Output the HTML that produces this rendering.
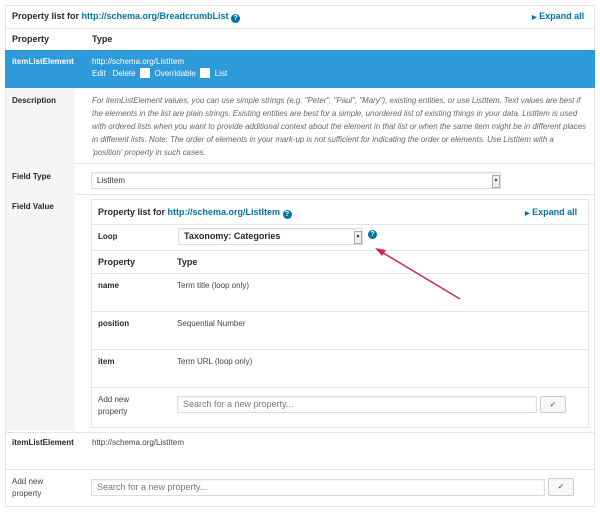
<!DOCTYPE html>
<html><head><meta charset="utf-8"><style>
*{margin:0;padding:0;box-sizing:border-box}
body{width:600px;height:512px;background:#fff;font-family:"Liberation Sans",Arial,sans-serif;font-size:8px;color:#444;position:relative;overflow:hidden}
.a{position:absolute}
.b{font-weight:bold;color:#23282d}
.lnk{color:#0073aa;font-weight:bold}
.hl{position:absolute;height:1px;background:#e5e5e5}
.q{display:inline-block;width:9px;height:9px;border-radius:50%;background:#0073aa;color:#fff;font-size:7px;font-weight:bold;text-align:center;line-height:9px;vertical-align:-1px}
.inp{position:absolute;border:1px solid #ddd;background:#fff;box-shadow:inset 0 1px 2px rgba(0,0,0,.07);font-size:9px;color:#777;padding-left:5px}
.btn{position:absolute;border:1px solid #ccc;background:#f7f7f7;border-radius:2px;text-align:center;font-size:8px}
.sel{position:absolute;right:0;top:2px;width:8px;height:13px;border:1px solid #aaa;background:#eee;font-size:5px;text-align:center;line-height:11px}
</style></head><body>
<div class="a" style="left:5px;top:5px;width:590px;height:502px;border:1px solid #e5e5e5"></div>
<div class="a b" style="left:12px;top:11px;font-size:9px">Property list for <span class="lnk">http://schema.org/BreadcrumbList</span> <span class="q">?</span></div>
<div class="a lnk" style="left:532px;top:11px;font-size:9px"><span style="font-size:6px">▶</span> Expand all</div>
<div class="hl" style="left:5px;top:28px;width:590px"></div>
<div class="a b" style="left:12px;top:34px;font-size:9px">Property</div>
<div class="a b" style="left:92px;top:34px;font-size:9px">Type</div>
<div class="a" style="left:5px;top:50px;width:590px;height:38px;background:#2e9ad9"></div>
<div class="a" style="left:12px;top:57px;font-weight:bold;color:#fff">itemListElement</div>
<div class="a" style="left:92px;top:57px;color:#fff">http://schema.org/ListItem</div>
<div class="a" style="left:92px;top:68px;color:#fff">Edit &nbsp; Delete &nbsp;<span style="display:inline-block;width:10px;height:10px;background:#fff;vertical-align:-2px"></span>&nbsp; Overridable &nbsp;<span style="display:inline-block;width:10px;height:10px;background:#fff;vertical-align:-2px"></span>&nbsp; List</div>
<div class="a" style="left:6px;top:88px;width:69px;height:343px;background:#f5f5f5"></div>
<div class="a b" style="left:12px;top:96px">Description</div>
<div class="a" style="left:92px;top:94px;width:494px;font-style:italic;font-size:7.9px;line-height:13px;color:#666">For itemListElement values, you can use simple strings (e.g. "Peter", "Paul", "Mary"), existing entities, or use ListItem. Text values are best if the elements in the list are plain strings. Existing entities are best for a simple, unordered list of existing things in your data. ListItem is used with ordered lists when you want to provide additional context about the element in that list or when the same item might be in different places in different lists. Note: The order of elements in your mark-up is not sufficient for indicating the order or elements. Use ListItem with a 'position' property in such cases.</div>
<div class="hl" style="left:75px;top:163px;width:520px"></div>
<div class="a b" style="left:12px;top:172px">Field Type</div>
<div class="inp" style="left:91px;top:172px;width:410px;height:17px;line-height:15px;color:#333;font-size:8px">ListItem<span class="sel">▼</span></div>
<div class="hl" style="left:75px;top:194px;width:520px"></div>
<div class="a b" style="left:12px;top:202px">Field Value</div>
<div class="a" style="left:91px;top:199px;width:498px;height:229px;border:1px solid #e5e5e5"></div>
<div class="a b" style="left:98px;top:207px;font-size:9px">Property list for <span class="lnk">http://schema.org/ListItem</span> <span class="q">?</span></div>
<div class="a lnk" style="left:525px;top:207px;font-size:9px"><span style="font-size:6px">▶</span> Expand all</div>
<div class="hl" style="left:92px;top:224px;width:496px"></div>
<div class="a b" style="left:98px;top:232px">Loop</div>
<div class="inp" style="left:178px;top:228px;width:185px;height:17px;line-height:15px;color:#23282d;font-weight:bold;font-size:9px">Taxonomy: Categories<span class="sel">▼</span></div>
<div class="a" style="left:368px;top:228px"><span class="q">?</span></div>
<div class="hl" style="left:92px;top:250px;width:496px"></div>
<div class="a b" style="left:98px;top:257px;font-size:9px">Property</div>
<div class="a b" style="left:177px;top:257px;font-size:9px">Type</div>
<div class="hl" style="left:92px;top:273px;width:496px"></div>
<div class="a b" style="left:98px;top:281px">name</div><div class="a" style="left:177px;top:281px">Term title (loop only)</div>
<div class="hl" style="left:92px;top:311px;width:496px"></div>
<div class="a b" style="left:98px;top:319px">position</div><div class="a" style="left:177px;top:319px">Sequential Number</div>
<div class="hl" style="left:92px;top:349px;width:496px"></div>
<div class="a b" style="left:98px;top:357px">item</div><div class="a" style="left:177px;top:357px">Term URL (loop only)</div>
<div class="hl" style="left:92px;top:387px;width:496px"></div>
<div class="a" style="left:98px;top:394px;line-height:12px">Add new<br>property</div>
<div class="inp" style="left:177px;top:396px;width:360px;height:17px;line-height:15px">Search for a new property...</div>
<div class="btn" style="left:540px;top:396px;width:26px;height:17px;line-height:15px">✓</div>
<div class="hl" style="left:5px;top:432px;width:590px"></div>
<div class="a b" style="left:12px;top:438px">itemListElement</div><div class="a" style="left:92px;top:438px">http://schema.org/ListItem</div>
<div class="hl" style="left:5px;top:469px;width:590px"></div>
<div class="a" style="left:12px;top:476px;line-height:12px">Add new<br>property</div>
<div class="inp" style="left:91px;top:479px;width:454px;height:17px;line-height:15px">Search for a new property...</div>
<div class="btn" style="left:548px;top:478px;width:26px;height:18px;line-height:16px">✓</div>
<svg class="a" style="left:370px;top:245px" width="95" height="58"><line x1="90" y1="54" x2="10" y2="6" stroke="#c8285a" stroke-width="1.5"/><polygon points="5,3 16,5 12,11" fill="#c8285a"/></svg>
</body></html>
